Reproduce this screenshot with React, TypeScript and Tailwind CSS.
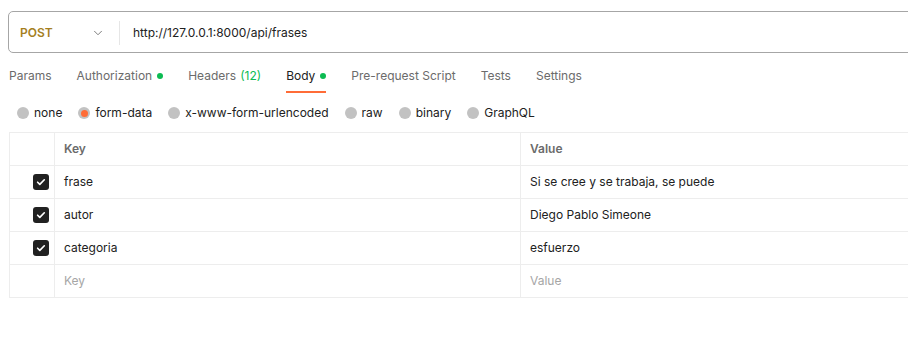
import { ChevronDown } from "lucide-react";

// ─── Data ────────────────────────────────────────────────────────────────────
const tabs = [
  { label: "Params" },
  { label: "Authorization", dot: true },
  { label: "Headers", count: "(12)" },
  { label: "Body", dot: true, active: true },
  { label: "Pre-request Script" },
  { label: "Tests" },
  { label: "Settings" },
];

const bodyTypes = [
  { label: "none" },
  { label: "form-data", checked: true },
  { label: "x-www-form-urlencoded" },
  { label: "raw" },
  { label: "binary" },
  { label: "GraphQL" },
];

const rows = [
  { key: "frase", value: "Si se cree y se trabaja, se puede" },
  { key: "autor", value: "Diego Pablo Simeone" },
  { key: "categoria", value: "esfuerzo" },
];

// ─── Small pieces ────────────────────────────────────────────────────────────
function Dot() {
  return <span className="ml-[5px] inline-block h-[6px] w-[6px] rounded-full bg-[#0cbb52]" />;
}

function Check() {
  return (
    <span className="flex h-4 w-4 items-center justify-center rounded-[3px] bg-[#212121]">
      <svg viewBox="0 0 16 16" className="h-3 w-3" fill="none">
        <path d="M3.5 8.3l2.9 2.9 6-6.2" stroke="white" strokeWidth="2.2" strokeLinecap="round" strokeLinejoin="round" />
      </svg>
    </span>
  );
}

function Radio({ checked }: { checked?: boolean }) {
  return (
    <span className="flex h-3 w-3 items-center justify-center rounded-full bg-[#c2c2c2]">
      {checked && <span className="h-[7px] w-[7px] rounded-full bg-[#ff6c37]" />}
    </span>
  );
}

// ─── Main ────────────────────────────────────────────────────────────────────
export default function App() {
  return (
    <div
      className="h-[363px] w-[908px] overflow-hidden bg-white text-[12px] text-[#212121]"
      style={{ fontFamily: "Inter, 'Noto Sans', sans-serif" }}
    >
      {/* URL bar */}
      <div className="ml-2 mt-[11px] -mr-4 flex h-[42px] items-center rounded-[5px] border border-[#a6a6a6] pt-px">
        <div className="flex w-[110px] items-center pl-[11px] pr-[14px]">
          <span className="text-[12px] font-semibold text-[#a57f1f]">POST</span>
          <ChevronDown className="ml-auto h-[14px] w-[14px] text-[#6b6b6b]" strokeWidth={1.5} />
        </div>
        <div className="h-6 w-px bg-[#e6e6e6]" />
        <span className="ml-[13px] text-[12px] text-[#212121]">http://127.0.0.1:8000/api/frases</span>
      </div>

      {/* Tabs */}
      <div className="ml-[9px] mt-[14px] flex h-[26px] items-start gap-[25px]">
        {tabs.map((t) => (
          <div key={t.label} className="relative flex h-full items-start">
            <span className="flex items-center">
              <span className={t.active ? "text-[#212121]" : "text-[#6b6b6b]"}>{t.label}</span>
              {t.count && <span className="ml-1 text-[#0cbb52]">{t.count}</span>}
              {t.dot && <Dot />}
            </span>
            {t.active && <span className="absolute bottom-0 left-0 right-0 h-[2px] bg-[#ff6c37]" />}
          </div>
        ))}
      </div>

      {/* Body types */}
      <div className="ml-[17px] mt-[10px] flex h-5 items-center gap-4">
        {bodyTypes.map((b) => (
          <label key={b.label} className="flex items-center gap-[5px] text-[#212121]">
            <Radio checked={b.checked} />
            <span>{b.label}</span>
          </label>
        ))}
      </div>

      {/* Table */}
      <div className="ml-[9px] mt-[9px] -mr-4 border-t border-l border-[#ededed]">
        <div className="grid h-[33px] grid-cols-[45px_466px_1fr] border-b border-[#ededed] font-semibold text-[#6b6b6b]">
          <div className="border-r border-[#ededed]" />
          <div className="flex items-center border-r border-[#ededed] pl-[9px]">Key</div>
          <div className="flex items-center pl-[9px]">Value</div>
        </div>
        {rows.map((r) => (
          <div key={r.key} className="grid h-[33px] grid-cols-[45px_466px_1fr] border-b border-[#ededed]">
            <div className="flex items-center justify-end border-r border-[#ededed] pr-[5px]">
              <Check />
            </div>
            <div className="flex items-center border-r border-[#ededed] pl-[9px]">{r.key}</div>
            <div className="flex items-center pl-[9px]">{r.value}</div>
          </div>
        ))}
        <div className="grid h-[33px] grid-cols-[45px_466px_1fr] border-b border-[#ededed] text-[#a6a6a6]">
          <div className="border-r border-[#ededed]" />
          <div className="flex items-center border-r border-[#ededed] pl-[9px]">Key</div>
          <div className="flex items-center pl-[9px]">Value</div>
        </div>
      </div>
    </div>
  );
}
